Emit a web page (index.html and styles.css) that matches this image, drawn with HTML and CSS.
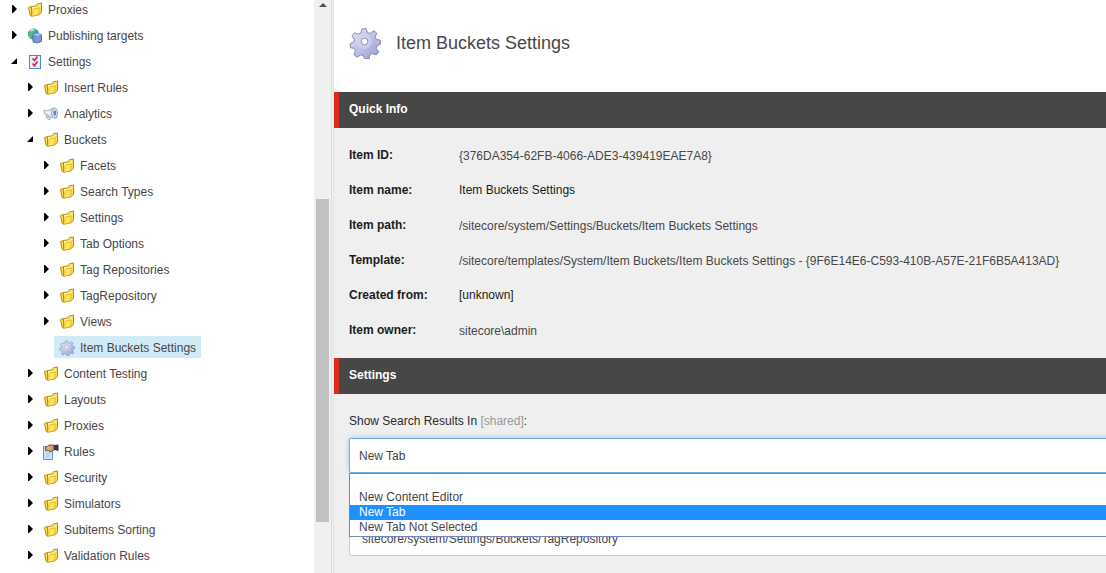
FILE: index.html
```html
<!DOCTYPE html>
<html lang="en">
<head>
    <meta charset="UTF-8">
    <meta name="viewport" content="width=device-width, initial-scale=1.0">
    <title>Content Editor</title>
    <link rel="stylesheet" href="styles.css">
</head>
<body>

<!-- Shared icons -->
<svg class="sprite" aria-hidden="true">
    <defs>
        <linearGradient id="gold" x1="0" y1="0" x2="1" y2="1">
            <stop offset="0" stop-color="#fffbc8"/>
            <stop offset="1" stop-color="#f7cc1c"/>
        </linearGradient>
        <linearGradient id="steel" x1="0" y1="0" x2="1" y2="1">
            <stop offset="0" stop-color="#e2e4f8"/>
            <stop offset="1" stop-color="#9a9cd2"/>
        </linearGradient>
    </defs>
    <symbol id="closed" viewBox="0 0 10 10"><path d="M3 1v8h1l4-4-4-4z"/></symbol>
    <symbol id="open" viewBox="0 0 10 10"><path d="M8 2v6H2z"/></symbol>
    <symbol id="folder" viewBox="0 0 16 16">
        <path d="M1.500 5.500l3.500-1v9.500l-1.800-.5z" fill="#fbdc55" stroke="#bd8a0c"/>
        <path d="M4.500 4.500l5-.7.8-2 4.200-.8v9.500l-3 2.500-7 1.200z" fill="url(#gold)" stroke="#bd8a0c"/>
        <path d="M4.500 14l2-7 5.800-1-1 7z" fill="#ffe45c" stroke="#e0ae20" stroke-width=".7"/>
    </symbol>
    <symbol id="gear" viewBox="0 0 32 32">
        <path d="M13 2l4-.6 1.600 4.300 2.600.6L24.800 3.600l3 2.600-1.600 4.200 1.500 2.200 3.500.4.300 4-3.500 1.900-.7 2.500 2.500 3.300-2.400 3.200-4.300-1.300-2.400 1.500-.5 3.600-4.200.3-1.900-3.500-2.600-.6-3.600 2.500-2.900-2.700 1.400-4.200-1.400-2.200-3.600-.6-.2-4 3.400-1.700.7-2.600-2.300-3.500 2.500-3.100 4.200 1.400 2.200-1.200z" fill="url(#steel)" stroke="#75769f" stroke-width=".8"/>
        <circle cx="15.500" cy="14.500" r="7.500" fill="#d4d6f3" opacity=".6"/>
        <circle cx="15.500" cy="14.500" r="3.300" fill="#fff" stroke="#8e90bd"/>
    </symbol>
    <symbol id="globe" viewBox="0 0 16 16">
        <circle cx="6.500" cy="6" r="5.500" fill="#3b9ad6"/>
        <path d="M2 3c2-2.300 5-3 7-1.800L7 4.500 5 5l1 2-2 4C1 9 .5 6 2 3z" fill="#63b977"/>
        <path d="M3 3q2-2 4-1" fill="none" stroke="#d5f1e4" stroke-width="1.500"/>
        <path d="M6 6.500l5-1 3.500 1v7l-4 1.500L6 14z" fill="#7896d6" stroke="#45619f" stroke-width=".8"/>
        <path d="M6 6.500l5-1 3.500 1-4 1zM10.500 7.500V15" fill="#c0d2f4" stroke="#93abe0" stroke-width=".6"/>
    </symbol>
    <symbol id="checklist" viewBox="0 0 16 16">
        <rect x="2.500" y="1.500" width="11" height="13" fill="#e4f0fc" stroke="#4c8ac5"/>
        <path d="M5.500 4.500l2 2 3-4M5.500 9.500l2 2 3-4" fill="none" stroke="#d5212e" stroke-width="1.500"/>
        <path d="M6 12.500h3" stroke="#e58b93"/>
    </symbol>
    <symbol id="megaphone" viewBox="0 0 16 16">
        <path d="M1 4l3 1 7-3 3 10-5-1-3 3-3-3 1-2-2-1z" fill="#eef2f6" stroke="#8b9eae" stroke-width=".8"/>
        <ellipse cx="11.500" cy="7" rx="3" ry="5.200" fill="#cfdfef" stroke="#7e93a8" stroke-width=".8"/>
        <ellipse cx="11.800" cy="7" rx="1.400" ry="2.700" fill="#5e83bd"/>
        <path d="M4 8v3l3 2 1-3z" fill="#b4c3d0"/>
    </symbol>
    <symbol id="rules" viewBox="0 0 16 16">
        <path d="M.5 2.500h9v13h-9z" fill="#d5e8fb" stroke="#5a92cc"/>
        <path d="M2.500 9h5M2.500 11h5M2.500 13h4" stroke="#a4c6ea"/>
        <path d="M2 4l4-3 5 0v5L7 8 5.500 6 3 7z" fill="#d09a5c" stroke="#60401f" stroke-width=".8"/>
        <path d="M4 4l3-1M5 5.500l3-1" stroke="#f2cc95"/>
        <path d="M11 1l4.500-.5V7L11 6z" fill="#343848"/>
    </symbol>
</svg>

<div class="editor">
    <nav class="tree-panel" aria-label="Content tree">
        <ul class="tree">
            <li>
                <div class="row"><button class="toggle" aria-label="Expand"><svg><use href="#closed"/></svg></button><a class="node" href="#"><svg><use href="#folder"/></svg>Proxies</a></div>
            </li>
            <li>
                <div class="row"><button class="toggle" aria-label="Expand"><svg><use href="#closed"/></svg></button><a class="node" href="#"><svg><use href="#globe"/></svg>Publishing targets</a></div>
            </li>
            <li>
                <div class="row"><button class="toggle" aria-label="Collapse"><svg><use href="#open"/></svg></button><a class="node" href="#"><svg><use href="#checklist"/></svg>Settings</a></div>
                <ul>
                    <li>
                        <div class="row"><button class="toggle" aria-label="Expand"><svg><use href="#closed"/></svg></button><a class="node" href="#"><svg><use href="#folder"/></svg>Insert Rules</a></div>
                    </li>
                    <li>
                        <div class="row"><button class="toggle" aria-label="Expand"><svg><use href="#closed"/></svg></button><a class="node" href="#"><svg><use href="#megaphone"/></svg>Analytics</a></div>
                    </li>
                    <li>
                        <div class="row"><button class="toggle" aria-label="Collapse"><svg><use href="#open"/></svg></button><a class="node" href="#"><svg><use href="#folder"/></svg>Buckets</a></div>
                        <ul>
                            <li>
                                <div class="row"><button class="toggle" aria-label="Expand"><svg><use href="#closed"/></svg></button><a class="node" href="#"><svg><use href="#folder"/></svg>Facets</a></div>
                            </li>
                            <li>
                                <div class="row"><button class="toggle" aria-label="Expand"><svg><use href="#closed"/></svg></button><a class="node" href="#"><svg><use href="#folder"/></svg>Search Types</a></div>
                            </li>
                            <li>
                                <div class="row"><button class="toggle" aria-label="Expand"><svg><use href="#closed"/></svg></button><a class="node" href="#"><svg><use href="#folder"/></svg>Settings</a></div>
                            </li>
                            <li>
                                <div class="row"><button class="toggle" aria-label="Expand"><svg><use href="#closed"/></svg></button><a class="node" href="#"><svg><use href="#folder"/></svg>Tab Options</a></div>
                            </li>
                            <li>
                                <div class="row"><button class="toggle" aria-label="Expand"><svg><use href="#closed"/></svg></button><a class="node" href="#"><svg><use href="#folder"/></svg>Tag Repositories</a></div>
                            </li>
                            <li>
                                <div class="row"><button class="toggle" aria-label="Expand"><svg><use href="#closed"/></svg></button><a class="node" href="#"><svg><use href="#folder"/></svg>TagRepository</a></div>
                            </li>
                            <li>
                                <div class="row"><button class="toggle" aria-label="Expand"><svg><use href="#closed"/></svg></button><a class="node" href="#"><svg><use href="#folder"/></svg>Views</a></div>
                            </li>
                            <li>
                                <div class="row leaf"><a class="node selected" href="#" aria-current="true"><svg><use href="#gear"/></svg>Item Buckets Settings</a></div>
                            </li>
                        </ul>
                    </li>
                    <li>
                        <div class="row"><button class="toggle" aria-label="Expand"><svg><use href="#closed"/></svg></button><a class="node" href="#"><svg><use href="#folder"/></svg>Content Testing</a></div>
                    </li>
                    <li>
                        <div class="row"><button class="toggle" aria-label="Expand"><svg><use href="#closed"/></svg></button><a class="node" href="#"><svg><use href="#folder"/></svg>Layouts</a></div>
                    </li>
                    <li>
                        <div class="row"><button class="toggle" aria-label="Expand"><svg><use href="#closed"/></svg></button><a class="node" href="#"><svg><use href="#folder"/></svg>Proxies</a></div>
                    </li>
                    <li>
                        <div class="row"><button class="toggle" aria-label="Expand"><svg><use href="#closed"/></svg></button><a class="node" href="#"><svg><use href="#rules"/></svg>Rules</a></div>
                    </li>
                    <li>
                        <div class="row"><button class="toggle" aria-label="Expand"><svg><use href="#closed"/></svg></button><a class="node" href="#"><svg><use href="#folder"/></svg>Security</a></div>
                    </li>
                    <li>
                        <div class="row"><button class="toggle" aria-label="Expand"><svg><use href="#closed"/></svg></button><a class="node" href="#"><svg><use href="#folder"/></svg>Simulators</a></div>
                    </li>
                    <li>
                        <div class="row"><button class="toggle" aria-label="Expand"><svg><use href="#closed"/></svg></button><a class="node" href="#"><svg><use href="#folder"/></svg>Subitems Sorting</a></div>
                    </li>
                    <li>
                        <div class="row"><button class="toggle" aria-label="Expand"><svg><use href="#closed"/></svg></button><a class="node" href="#"><svg><use href="#folder"/></svg>Validation Rules</a></div>
                    </li>
                </ul>
            </li>
        </ul>
    </nav>

    <!-- Tree scrollbar -->
    <div class="scrollbar" aria-hidden="true">
        <svg class="scroll-up" viewBox="0 0 8 4"><path d="M0 4l4-4 4 4z"/></svg>
        <div class="thumb"></div>
    </div>
    <div class="splitter"></div>

    <main class="content">
        <header class="item-header">
            <svg><use href="#gear"/></svg>
            <h1>Item Buckets Settings</h1>
        </header>

        <!-- Quick Info Section -->
        <h2 class="section-title">Quick Info</h2>
        <table class="quick-info">
            <tr><th scope="row"><label for="itemId">Item ID:</label></th><td><input type="text" id="itemId" readonly value="{376DA354-62FB-4066-ADE3-439419EAE7A8}"></td></tr>
            <tr><th scope="row">Item name:</th><td>Item Buckets Settings</td></tr>
            <tr><th scope="row"><label for="itemPath">Item path:</label></th><td><input type="text" id="itemPath" readonly value="/sitecore/system/Settings/Buckets/Item Buckets Settings"></td></tr>
            <tr><th scope="row"><label for="template">Template:</label></th><td><input type="text" id="template" readonly value="/sitecore/templates/System/Item Buckets/Item Buckets Settings - {9F6E14E6-C593-410B-A57E-21F6B5A413AD}"></td></tr>
            <tr><th scope="row">Created from:</th><td>[unknown]</td></tr>
            <tr><th scope="row"><label for="owner">Item owner:</label></th><td><input type="text" id="owner" readonly value="sitecore\admin"></td></tr>
        </table>

        <!-- Settings Section -->
        <h2 class="section-title">Settings</h2>
        <form class="fields">
            <label for="showResults">Show Search Results In <span class="shared">[shared]</span>:</label>
            <div class="dropdown">
                <select id="showResults" class="field focused">
                    <option></option>
                    <option>New Content Editor</option>
                    <option selected>New Tab</option>
                    <option>New Tab Not Selected</option>
                </select>
                <ul class="options" role="listbox" aria-label="Show Search Results In">
                    <li role="option"></li>
                    <li role="option">New Content Editor</li>
                    <li role="option" class="active" aria-selected="true">New Tab</li>
                    <li role="option">New Tab Not Selected</li>
                </ul>
            </div>
            <input type="text" class="field path" aria-label="Tag Parent" value="sitecore/system/Settings/Buckets/TagRepository">
        </form>
    </main>
</div>

</body>
</html>
```
FILE: styles.css
```css
* {
    box-sizing: border-box;
}
body {
    margin: 0;
    font-family: Arial, "Liberation Sans", sans-serif;
    font-size: 12px;
    color: #474747;
    background-color: #fff;
}
ul {
    list-style: none;
    margin: 0;
    padding: 0;
}
input, select, button {
    font: inherit;
    color: inherit;
}
.sprite {
    position: absolute;
    width: 0;
    height: 0;
}
.editor {
    display: flex;
    height: 100vh;
    overflow: hidden;
}

/* Content tree */
.tree-panel {
    flex: 0 0 314px;
    overflow: hidden;
}
.tree {
    margin-top: -4px;
    padding-left: 8px;
}
.tree ul {
    padding-left: 16px;
}
.row {
    display: flex;
    align-items: center;
    height: 26px;
}
.leaf {
    padding-left: 14px;
}
.toggle {
    display: flex;
    width: 14px;
    padding: 0 3px 0 1px;
    border: none;
    background: none;
    cursor: pointer;
}
.toggle svg {
    width: 10px;
    height: 10px;
    fill: #000;
}
.node {
    display: flex;
    align-items: center;
    gap: 5px;
    height: 22px;
    padding: 2px 5px 0;
    color: #474747;
    text-decoration: none;
    white-space: nowrap;
}
.node svg {
    width: 16px;
    height: 16px;
}
.selected {
    background-color: #d0ebf6;
}

/* Scrollbar and splitter */
.scrollbar {
    flex: 0 0 17px;
    display: grid;
    grid-template-rows: 199fr 323fr 51fr;
    padding: 0 2px;
    background-color: #f0f0f0;
}
.scroll-up {
    width: 8px;
    height: 4px;
    margin-top: 3px;
    justify-self: center;
    fill: #505050;
}
.thumb {
    background-color: #c1c1c1;
}
.splitter {
    flex: 0 0 3px;
    background-color: #f0f0f0;
    border-left: 1px solid #dcdcdc;
    border-right: 1px solid #e4e4e4;
}

/* Item editor */
.content {
    flex: 1;
    min-width: 0;
    overflow: hidden;
    background-color: #efefef;
}
.item-header {
    display: flex;
    align-items: center;
    gap: 15px;
    padding: 27px 15px 33px;
    background-color: #fff;
}
.item-header svg {
    width: 32px;
    height: 32px;
}
h1 {
    margin: 0;
    font-size: 18px;
    font-weight: normal;
}
.section-title {
    margin: 0;
    padding: 0 10px 2px;
    border-left: 5px solid #dc291e;
    background-color: #474747;
    color: #fff;
    font-size: 12px;
    line-height: 34px;
}
.quick-info {
    width: 100%;
    padding: 10px 15px;
    border-spacing: 0;
    color: #1c1c1c;
}
.quick-info th, .quick-info td {
    height: 35px;
    padding: 0 0 2px;
    text-align: left;
}
.quick-info th {
    width: 110px;
}
.quick-info input {
    display: block;
    width: 100%;
    padding: 2px 0 0;
    border: none;
    background: none;
    color: #474747;
}

/* Fields run past the right edge of the pane */
.fields {
    margin-right: -40px;
    padding: 20px 15px;
}
.fields label {
    display: block;
    margin-bottom: 10px;
    line-height: 14px;
    color: #2b2b2b;
}
.shared {
    color: #999;
}
.field {
    display: block;
    width: 100%;
    height: 35px;
    padding: 0 9px;
    border: 1px solid #ccc;
    border-radius: 2px;
    background-color: #fff;
    appearance: none;
}
.path {
    padding: 0 12px;
}
.focused {
    border-color: #66afe9;
    box-shadow: 0 0 5px rgba(102, 175, 233, 0.6);
    outline: none;
}
.dropdown {
    position: relative;
    margin-bottom: 48px;
}
.options {
    position: absolute;
    top: 100%;
    left: 0;
    right: 0;
    padding: 1px 0;
    border: 1px solid #7384bd;
    background-color: #fff;
}
.options li {
    height: 15px;
    padding: 0 9px;
    line-height: 15px;
}
.options .active {
    background-color: #1e90ff;
    color: #fff;
}
```
